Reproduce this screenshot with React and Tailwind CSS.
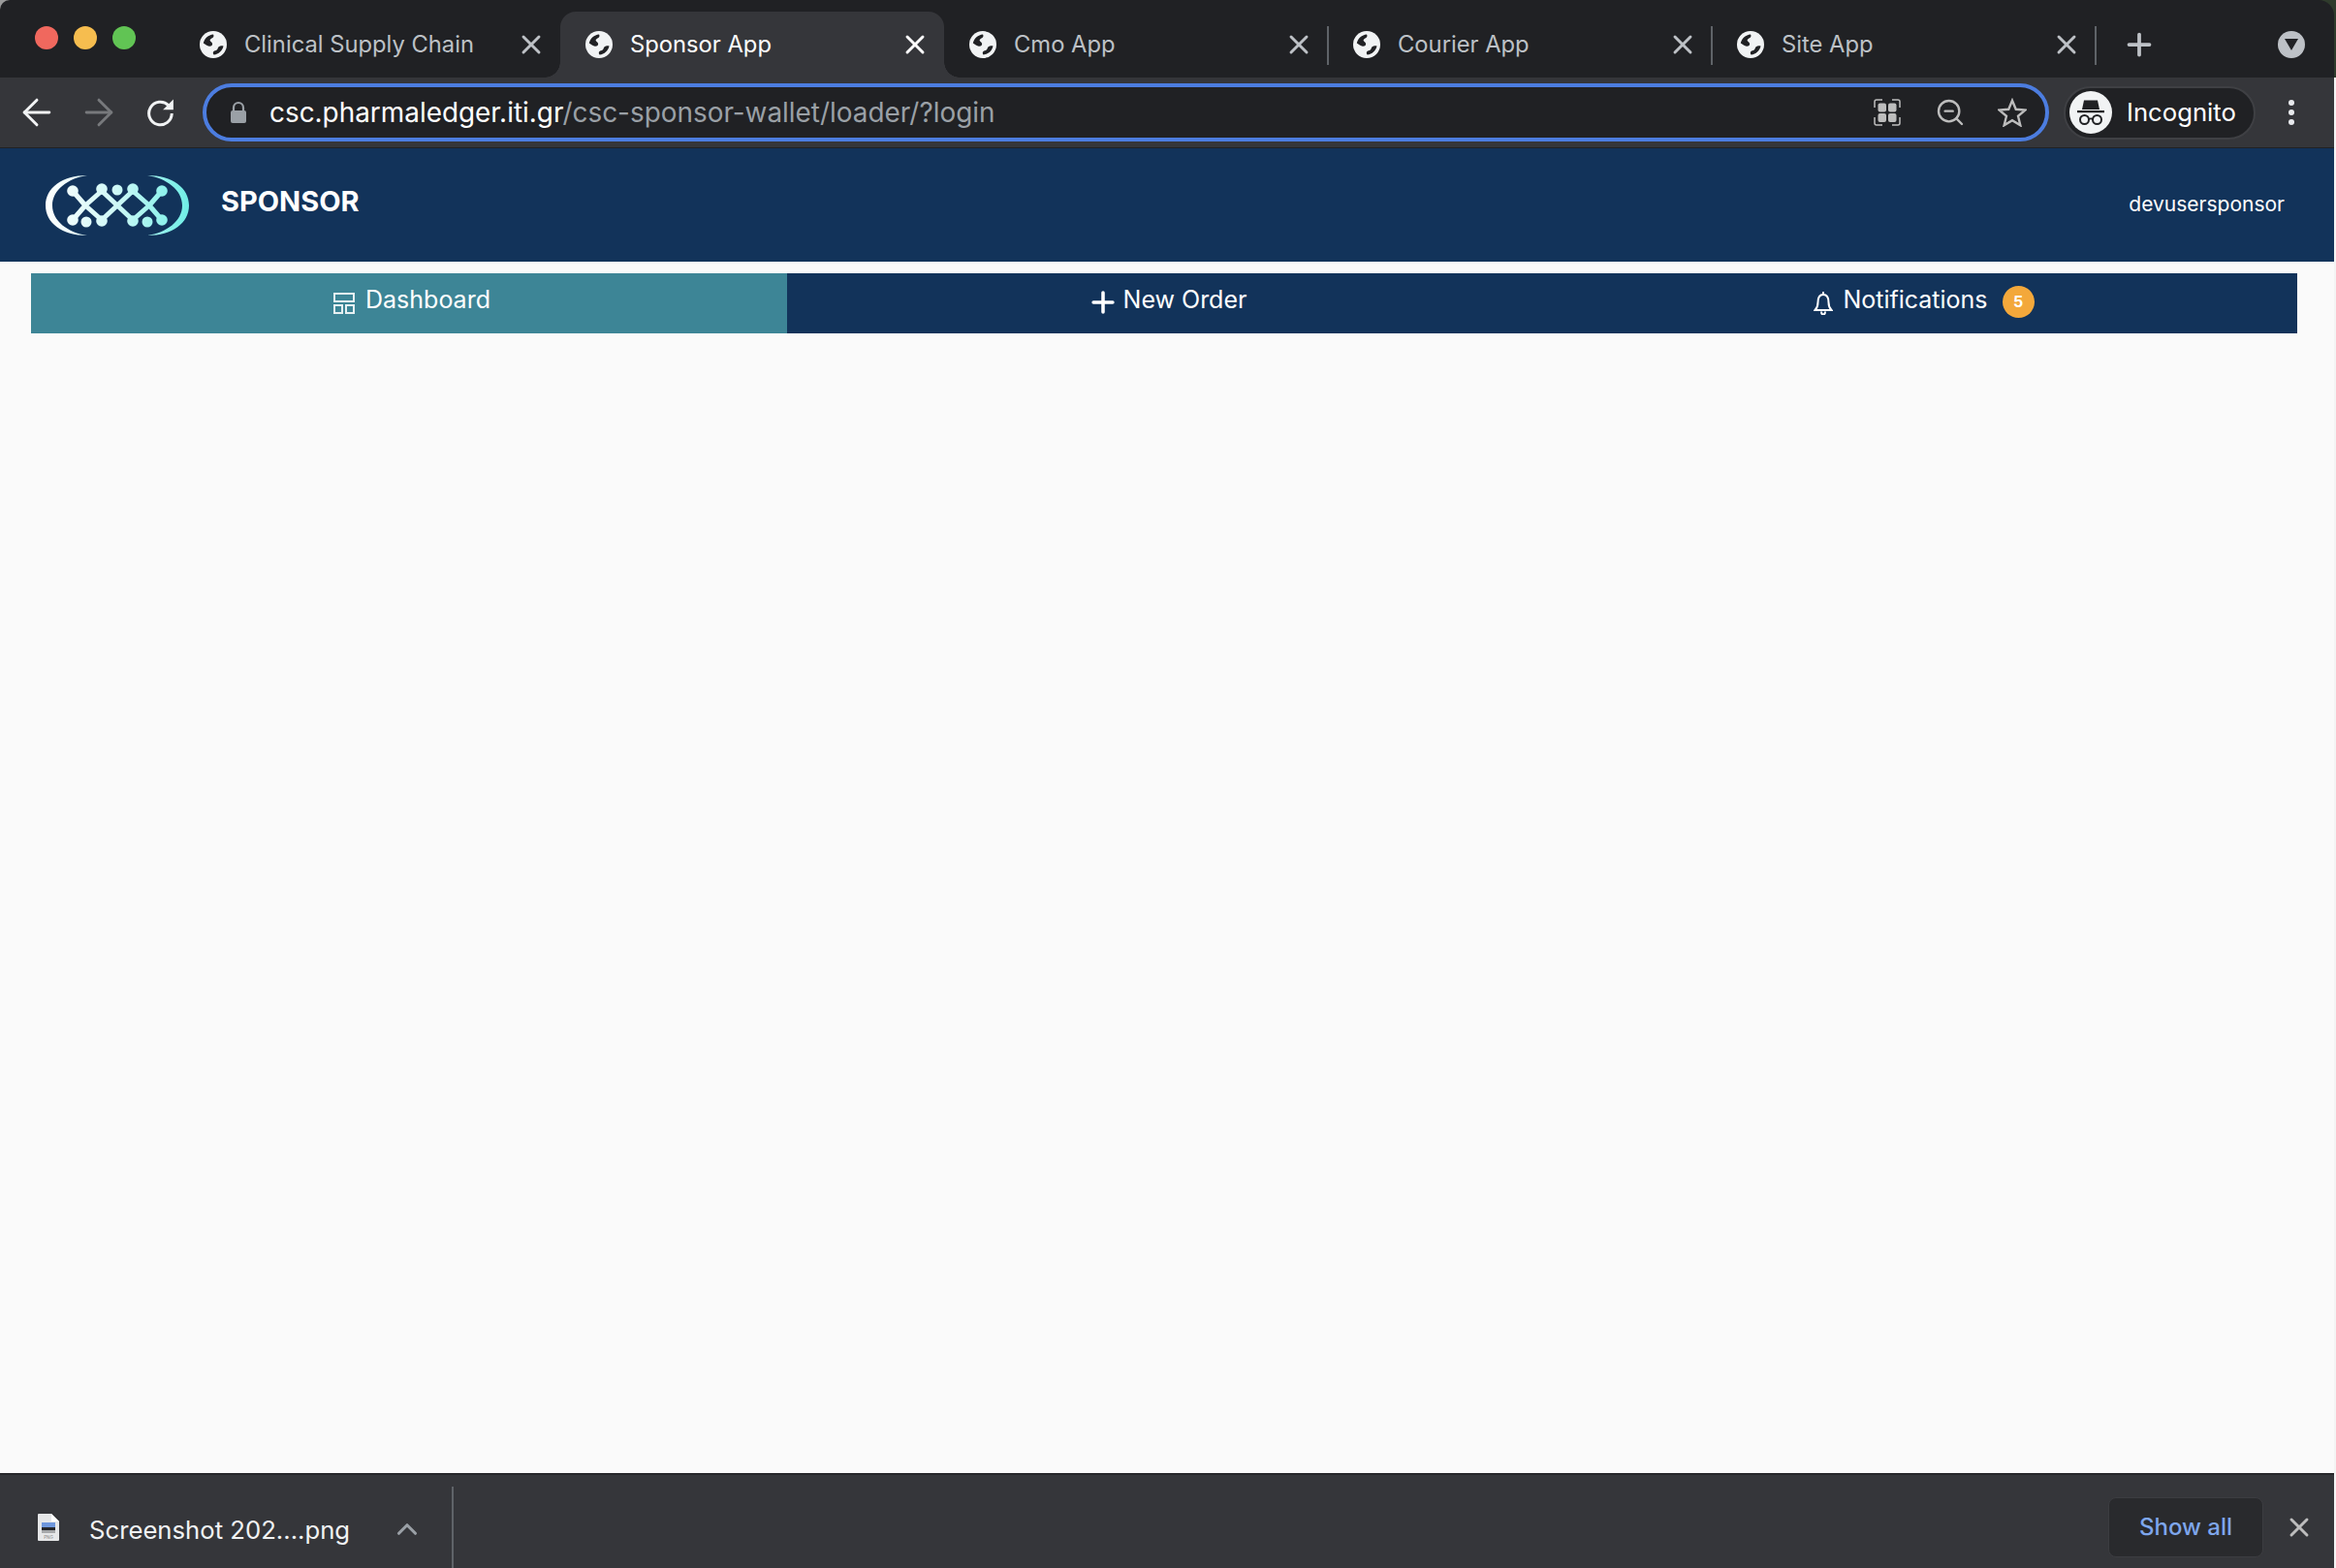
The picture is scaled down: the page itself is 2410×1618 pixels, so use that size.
import React from 'react'
import { ArrowLeft, ArrowRight, ZoomOut, X, Plus, ChevronUp } from 'lucide-react'

const tabs = [
  { name: 'Clinical Supply Chain', first: true },
  { name: 'Sponsor App', active: true },
  { name: 'Cmo App' },
  { name: 'Courier App', divider: true },
  { name: 'Site App', divider: true },
]

const Globe = () => (
  <svg width="28" height="28" viewBox="0 0 28 28" className="shrink-0">
    <circle cx="14" cy="14" r="14" fill="#f1f3f4" />
    <path d="M14 3.500C9 4 5 7.500 3.800 12.500c2 1.500 4 3 6 3.200 2.500.1 3.500-1 3.300-2.700-.2-1.500-2.200-2-2.500-3.200-.2-1.300 1.500-2 2.800-2.800 1-.7 1.500-2.200.6-3.500z" fill="#202124" />
    <path d="M24.500 15.500c-1.800-.5-3.500-.4-4.800.7-1.200 1-.8 2.700-2.300 3.500-1.500.8-3.300.7-3.600 2.300-.1 1 .2 1.900.8 2.500 5-.5 9-4.200 9.900-9z" fill="#202124" />
  </svg>
)

const Logo = () => (
  <svg width="150" height="64" viewBox="0 0 150 64" className="shrink-0 blur-[0.5px]">
    <defs>
      <linearGradient id="logoFill" gradientUnits="userSpaceOnUse" x1="0" y1="0" x2="150" y2="0">
        <stop offset="0" stopColor="#ffffff" />
        <stop offset="0.5" stopColor="#cdf8f6" />
        <stop offset="1" stopColor="#6eeee6" />
      </linearGradient>
    </defs>
    <g fill="url(#logoFill)">
      <path d="M44 1C18 1 1 14 1 32s17 31 43 31C24 60 8 48 8 32S24 4 44 1z" />
      <path d="M106 1c26 0 43 13 43 31s-17 31-43 31c20-3 36-15 36-31S126 4 106 1z" />
    </g>
    <g fill="none" stroke="url(#logoFill)" strokeWidth="5" strokeLinejoin="round">
      <path d="M29 17l13 15-13 15M121 17l-13 15 13 15" />
      <path d="M42 32l17-15 16 15-16 15zM75 32l16-15 17 15-17 15z" />
    </g>
    <g fill="url(#logoFill)">
      <circle cx="29" cy="17" r="5.800" />
      <circle cx="59" cy="15" r="5.800" />
      <circle cx="75" cy="16" r="5.500" />
      <circle cx="91" cy="15" r="5.800" />
      <circle cx="121" cy="17" r="5.800" />
      <circle cx="29" cy="47" r="5.800" />
      <circle cx="43" cy="49" r="5.500" />
      <circle cx="59" cy="48" r="5.800" />
      <circle cx="91" cy="48" r="5.800" />
      <circle cx="106" cy="49" r="5.500" />
      <circle cx="121" cy="47" r="5.800" />
    </g>
  </svg>
)

const TabItem = ({ name, active, divider, first }) => (
  <div className={`relative flex h-[68px] w-[396px] shrink-0 items-center self-end ${active ? 'rounded-t-[16px] bg-[#35363a] text-white' : 'text-[#bdc1c6]'}`}>
    {divider && <span className="absolute -left-px top-[15px] h-[40px] w-[2px] bg-[#5f6368]" />}
    {active && <span className="absolute -left-4 bottom-0 h-4 w-4 bg-[radial-gradient(circle_at_0_0,#202124_15.500px,#35363a_16px)]" />}
    {active && <span className="absolute -right-4 bottom-0 h-4 w-4 bg-[radial-gradient(circle_at_100%_0,#202124_15.500px,#35363a_16px)]" />}
    <div className={first ? 'ml-[24px]' : 'ml-[26px]'}><Globe /></div>
    <span className="ml-[18px] flex-1 text-[23.750px] leading-none">{name}</span>
    <X size={32} strokeWidth={2.2} className="mr-[14px]" />
  </div>
)

const App = () => {
  return (
    <div className="h-[1618px] w-full overflow-hidden bg-[#f4f4f4]" style={{ fontFamily: 'Inter, "Noto Sans", sans-serif' }}>
      <div className="flex h-full w-[2408px] flex-col">
        {/* Window tab strip */}
        <div className="w-[2410px] shrink-0 bg-[linear-gradient(90deg,#9a9a9a_0_50%,#2f3b2c_50%)]">
          <div className="flex h-[80px] w-[2408px] rounded-tl-[10px] rounded-tr-[16px] bg-[#202124]">
            <div className="flex w-[182px] shrink-0 items-start gap-[16px] pl-[36px] pt-[27px]">
              <span className="h-[24px] w-[24px] rounded-full bg-[#f0685e]" />
              <span className="h-[24px] w-[24px] rounded-full bg-[#f6bd4f]" />
              <span className="h-[24px] w-[24px] rounded-full bg-[#61c454]" />
            </div>
            {tabs.map((t) => (
              <TabItem key={t.name} {...t} />
            ))}
            <div className="relative flex flex-1 items-start">
              <span className="absolute -left-px top-[27px] h-[40px] w-[2px] bg-[#5f6368]" />
              <Plus size={36} strokeWidth={2.5} className="ml-[27px] mt-[28px] text-[#bdc1c6]" />
              <div className="ml-[125px] mt-[32px] flex h-[28px] w-[28px] items-center justify-center rounded-full bg-[#bdc1c6]">
                <svg width="14" height="12" viewBox="0 0 14 12"><path d="M0 0h14L7 12z" fill="#202124" /></svg>
              </div>
            </div>
          </div>
        </div>

        {/* Toolbar */}
        <div className="flex h-[73px] shrink-0 items-center border-b border-[#202124] bg-[#35363a] pl-[6px]">
          <div className="flex w-[64px] justify-center"><ArrowLeft size={44} strokeWidth={1.6} className="text-[#f1f3f4]" /></div>
          <div className="flex w-[64px] justify-center"><ArrowRight size={44} strokeWidth={1.6} className="text-[#77797c]" /></div>
          <div className="flex w-[64px] justify-center">
            <svg width="30" height="30" viewBox="0 0 28 28" fill="none">
              <path d="M21.300 7.200A11 11 0 1 0 24.500 15" stroke="#f1f3f4" strokeWidth="2.800" />
              <path d="M26 1.500v10H16z" fill="#f1f3f4" />
            </svg>
          </div>
          <div className="ml-[11px] flex h-[60px] w-[1905px] items-center rounded-full border-[4px] border-[#4c7de0] bg-[#202124] pl-[24px]">
            <svg width="18" height="24" viewBox="0 0 18 24" className="shrink-0">
              <path d="M4 10V7a5 5 0 0 1 10 0v3" fill="none" stroke="#9aa0a6" strokeWidth="2.200" />
              <rect x="1" y="10" width="16" height="13" rx="2" fill="#9aa0a6" />
            </svg>
            <span className="ml-[23px] flex-1 translate-y-[1px] text-[27.900px] leading-none text-[#9aa0a6]">
              <span className="text-white">csc.pharmaledger.iti.gr</span>/csc-sponsor-wallet/loader/?login
            </span>
            <svg width="28" height="28" viewBox="0 0 28 28" className="shrink-0">
              <path d="M9 1H3a2 2 0 0 0-2 2v6M19 1h6a2 2 0 0 1 2 2v6M9 27H3a2 2 0 0 1-2-2v-6M19 27h6a2 2 0 0 0 2-2v-6" fill="none" stroke="#bdbdbd" strokeWidth="1.500" />
              <g fill="#bdbdbd">
                <rect x="4.500" y="4.500" width="8.500" height="9" rx="2" />
                <rect x="15" y="4.500" width="8.500" height="9" rx="2" />
                <rect x="4.500" y="15" width="8.500" height="9" rx="2" />
                <rect x="15" y="15" width="8.500" height="9" rx="2" />
              </g>
            </svg>
            <ZoomOut size={32} strokeWidth={1.8} className="ml-[35px] text-[#bdbdbd]" />
            <svg width="30" height="30" viewBox="0 0 28 28" className="ml-[33px] mr-[19px] shrink-0">
              <path d="M14 2.500l3.500 8.500 9 .7-6.900 5.800 2.200 8.900-7.800-4.800-7.800 4.800 2.200-8.900-6.900-5.800 9-.7z" fill="none" stroke="#bdbdbd" strokeWidth="2.200" />
            </svg>
          </div>
          <div className="ml-[15px] flex h-[55px] w-[198px] items-center rounded-full border-2 border-[#3f4044] bg-[#202124] pl-[4px]">
            <div className="flex h-[44px] w-[44px] items-center justify-center rounded-full bg-[#f1f3f4]">
              <svg width="32" height="28" viewBox="0 0 32 28">
                <path d="M9 1.500h14l2 9.500H7zM2 12h28v2.200H2z" fill="#202124" />
                <circle cx="9.500" cy="21.500" r="4.500" fill="none" stroke="#202124" strokeWidth="2" />
                <circle cx="22.500" cy="21.500" r="4.500" fill="none" stroke="#202124" strokeWidth="2" />
                <path d="M14 21c1.300-.8 2.700-.8 4 0" fill="none" stroke="#202124" strokeWidth="1.800" />
              </svg>
            </div>
            <span className="ml-[15px] text-[25.700px] leading-none text-white">Incognito</span>
          </div>
          <div className="ml-[34px] flex flex-col gap-[4px]">
            <span className="h-[6px] w-[6px] rounded-full bg-[#e8eaed]" />
            <span className="h-[6px] w-[6px] rounded-full bg-[#e8eaed]" />
            <span className="h-[6px] w-[6px] rounded-full bg-[#e8eaed]" />
          </div>
        </div>

        {/* App header */}
        <header className="flex h-[117px] shrink-0 items-center bg-[#12335a] pl-[46px] pr-[51px]">
          <Logo />
          <span className="ml-[32px] flex-1 -translate-y-[4px] text-[29px] font-bold leading-none text-white">SPONSOR</span>
          <span className="-translate-y-[1px] text-[21px] leading-none text-white">devusersponsor</span>
        </header>

        {/* Nav */}
        <div className="flex-1 bg-[#fafafa] pl-[32px] pt-[12px]">
          <nav className="grid h-[62px] w-[2338px] grid-cols-[780px_1fr_1fr] bg-[#12335a] text-[25px] leading-none text-white">
            <div className="flex items-center justify-center gap-[11px] bg-[#3d8596] pl-[6px]">
              <svg width="22" height="22" viewBox="0 0 22 22" className="shrink-0" fill="none" stroke="#e6f0f2" strokeWidth="2">
                <rect x="1" y="1" width="20" height="8" />
                <rect x="1" y="13" width="8" height="8" />
                <rect x="13" y="13" width="8" height="8" />
              </svg>
              <span className="-translate-y-[4px]">Dashboard</span>
            </div>
            <div className="flex items-center justify-center gap-[9px] pl-[9px]">
              <Plus size={34} strokeWidth={2.500} className="-mx-[5px] -mt-[2px] shrink-0" />
              <span className="-translate-y-[4px]">New Order</span>
            </div>
            <div className="flex items-center justify-center pl-[9px]">
              <svg width="20" height="24" viewBox="0 0 20 24" className="shrink-0" fill="none" stroke="#ffffff" strokeWidth="2">
                <path d="M10 0v3M10 3c-4.500 0-5.500 4-5.500 8 0 4-1 6-3 8h17c-2-2-3-4-3-8 0-4-1-8-5.500-8z" />
                <path d="M8 20.500c0 2 .8 3 2 3s2-1 2-3" />
              </svg>
              <span className="ml-[10px] -translate-y-[4px]">Notifications</span>
              <span className="ml-[15px] flex h-[33px] w-[33px] -translate-y-[2px] items-center justify-center rounded-full bg-[#f3a83b] text-[16px] font-bold">5</span>
            </div>
          </nav>
        </div>

        {/* Downloads bar */}
        <footer className="flex h-[98px] shrink-0 items-center border-t-2 border-[#26272a] bg-[#35363a] pt-[12px]">
          <svg width="22" height="28" viewBox="0 0 22 28" className="ml-[39px] shrink-0">
            <path d="M1 0h13l8 8v19a1 1 0 0 1-1 1H1a1 1 0 0 1-1-1V1a1 1 0 0 1 1-1z" fill="#e6e7e8" />
            <path d="M14 0v8h8z" fill="#ffffff" />
            <rect x="4" y="9" width="14" height="5" fill="#6f97dc" />
            <rect x="4" y="14" width="14" height="3" fill="#26272a" />
            <rect x="4" y="17" width="14" height="3" fill="#a6a8aa" />
            <text x="11" y="26" textAnchor="middle" fontSize="4.500" fill="#8a8a8a">PNG</text>
          </svg>
          <span className="ml-[31px] w-[311px] translate-y-[3px] text-[25.700px] leading-none text-[#f1f3f4]">Screenshot 202....png</span>
          <ChevronUp size={34} strokeWidth={2.2} className="translate-y-[2px] text-[#9aa0a6]" />
          <div className="ml-[29px] h-[84px] w-[2px] self-end bg-[#5f6368]" />
          <div className="ml-auto flex h-[62px] w-[160px] items-center justify-center rounded-[8px] border border-[#3c3d41] bg-[#292a2d] text-[24px] font-medium leading-none text-[#7ea6ec]">Show all</div>
          <X size={32} strokeWidth={2.2} className="ml-[21px] mr-[20px] text-[#bdbdbd]" />
        </footer>
      </div>
    </div>
  )
}

export default App
